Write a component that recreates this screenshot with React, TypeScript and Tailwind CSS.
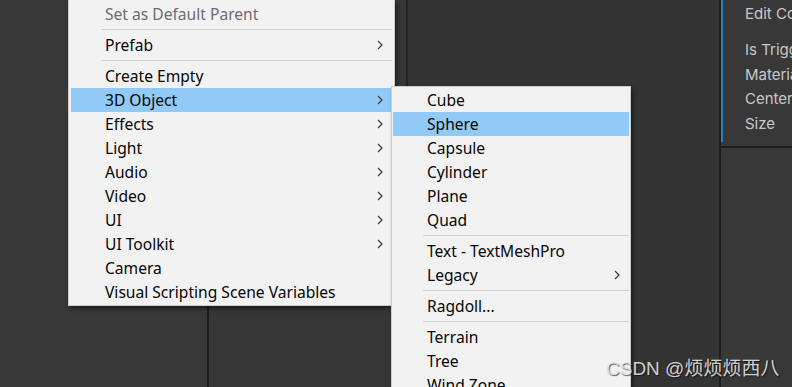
import type { ReactNode } from "react";

type Item =
    | { kind: "item"; label: string; sub?: boolean; active?: boolean; disabled?: boolean }
    | { kind: "sep" };

const mainItems: Item[] = [
    { kind: "item", label: "Set as Default Parent", disabled: true },
    { kind: "sep" },
    { kind: "item", label: "Prefab", sub: true },
    { kind: "sep" },
    { kind: "item", label: "Create Empty" },
    { kind: "item", label: "3D Object", sub: true, active: true },
    { kind: "item", label: "Effects", sub: true },
    { kind: "item", label: "Light", sub: true },
    { kind: "item", label: "Audio", sub: true },
    { kind: "item", label: "Video", sub: true },
    { kind: "item", label: "UI", sub: true },
    { kind: "item", label: "UI Toolkit", sub: true },
    { kind: "item", label: "Camera" },
    { kind: "item", label: "Visual Scripting Scene Variables" },
];

const subItems: Item[] = [
    { kind: "item", label: "Cube" },
    { kind: "item", label: "Sphere", active: true },
    { kind: "item", label: "Capsule" },
    { kind: "item", label: "Cylinder" },
    { kind: "item", label: "Plane" },
    { kind: "item", label: "Quad" },
    { kind: "sep" },
    { kind: "item", label: "Text - TextMeshPro" },
    { kind: "item", label: "Legacy", sub: true },
    { kind: "sep" },
    { kind: "item", label: "Ragdoll..." },
    { kind: "sep" },
    { kind: "item", label: "Terrain" },
    { kind: "item", label: "Tree" },
    { kind: "item", label: "Wind Zone" },
];

const Chevron = () => (
    <svg width="6" height="10" viewBox="0 0 6 10" className="shrink-0 -translate-y-px">
        <polyline points="1,1 5,5 1,9" fill="none" stroke="#3c3c3c" strokeWidth="1.2" />
    </svg>
);

const MenuList = ({ items }: { items: Item[] }) => (
    <>
        {items.map((it, i) =>
            it.kind === "sep" ? (
                <div key={i} className="h-[7px] flex items-center pl-[30px]">
                    <div className="h-px w-full bg-[#d2d2d2]" />
                </div>
            ) : (
                <div
                    key={i}
                    className={`h-6 flex items-center pt-[2px] pl-[34px] pr-[9px] ${it.active ? "bg-[#91c9f7]" : ""}`}
                >
                    <span className={`flex-1 whitespace-nowrap ${it.disabled ? "text-[#6d6d6d]" : "text-[#050505]"}`}>
                        {it.label}
                    </span>
                    {it.sub && <Chevron />}
                </div>
            )
        )}
    </>
);

const Menu = ({ className, children }: { className: string; children: ReactNode }) => (
    <div
        className={`absolute bg-[#f2f2f2] border border-[#cccccc] shadow-[2px_3px_4px_rgba(0,0,0,0.45)] text-[15.6px] ${className}`}
        style={{ fontFamily: '"Noto Sans", "Open Sans", sans-serif' }}
    >
        {children}
    </div>
);

export default function App() {
    return (
        <div className="relative w-[792px] h-[387px] overflow-hidden bg-[#383838]">
            {/* Background panels */}
            <div className="flex h-full">
                <div className="w-[207px] shrink-0 bg-[#383838]" />
                <div className="w-[2px] shrink-0 bg-[#1a1a1a]" />
                <div className="w-[197px] shrink-0 bg-[#363636]" />
                <div className="w-[2px] shrink-0 bg-[#232323]" />
                <div className="w-[311px] shrink-0 bg-[#343434]" />
                <div className="w-[2px] shrink-0 bg-[#1e1e1e]" />
                <div className="flex-1 min-w-0 overflow-hidden flex flex-col bg-[#383838]">
                    <div className="h-[146px] flex">
                        <div className="w-[2px] h-[142px] shrink-0 bg-[#1f82cf]" />
                        <div
                            className="flex-1 pl-[22px] text-[15px] text-[#c8c8c8] whitespace-nowrap"
                            style={{ fontFamily: "Inter, Roboto, sans-serif" }}
                        >
                            <div className="h-6 mt-[2px] flex items-center">Edit Collider</div>
                            <div className="h-3" />
                            <div className="h-[24.5px] flex items-center">Is Trigger</div>
                            <div className="h-[24.5px] flex items-center">Material</div>
                            <div className="h-[24.5px] flex items-center">Center</div>
                            <div className="h-[24.5px] flex items-center">Size</div>
                        </div>
                    </div>
                    <div className="h-[2px] bg-[#1e1e1e]" />
                    <div className="flex-1 bg-[#383838]" />
                </div>
            </div>

            {/* GameObject context menu */}
            <Menu className="left-[68px] top-0 w-[327px] border-t-0 pt-[2px] pb-px px-[2px]">
                <MenuList items={mainItems} />
            </Menu>

            {/* 3D Object submenu */}
            <Menu className="left-[391px] top-[86px] w-[240px] p-px">
                <MenuList items={subItems} />
            </Menu>

            {/* Watermark */}
            <div
                className="absolute left-[606px] top-[355px] text-[19px] text-[#e6e6e6]/90 whitespace-nowrap [text-shadow:1px_1px_1px_rgba(0,0,0,0.6)]"
                style={{ fontFamily: '"Liberation Sans", "Noto Sans CJK SC", sans-serif' }}
            >
                CSDN @烦烦烦西八
            </div>
        </div>
    );
}
